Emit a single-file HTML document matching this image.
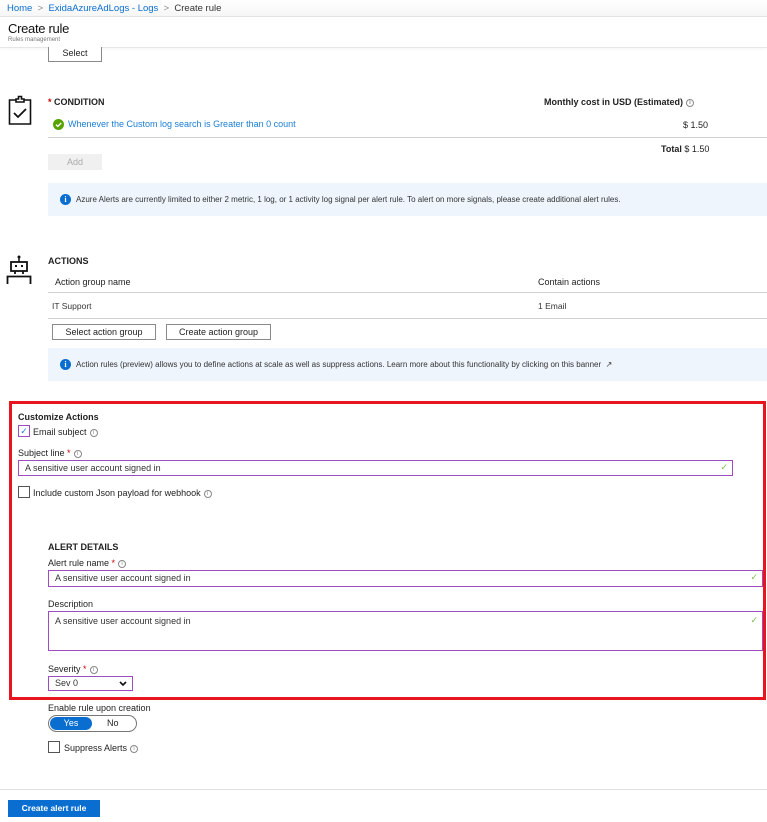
<!DOCTYPE html>
<html><head><meta charset="utf-8">
<style>
*{margin:0;padding:0;box-sizing:border-box}
body{width:767px;height:822px;background:#fff;font-family:"Liberation Sans",sans-serif;font-size:9px;color:#222;position:relative;overflow:hidden}
.a{position:absolute;white-space:nowrap}
.btn{position:absolute;border:1px solid #8a8a8a;background:#fff;text-align:center;font-size:9px;line-height:13px;color:#222}
.line{position:absolute;height:1px;background:#d0d0d0}
.b{font-weight:bold}
.req{color:#c00}
.inp{position:absolute;border:1px solid #a04cc0;background:#fff;font-size:9px;padding:2px 6px;color:#333}
.ck{position:absolute;right:4px;top:1px;color:#7cc04c;font-size:9px}
.i{display:inline-block;width:8px;height:8px;border:1px solid #888;border-radius:50%;font-size:6px;line-height:6px;text-align:center;color:#888;vertical-align:middle;margin-left:3px}
.cb{position:absolute;width:12px;height:12px;border:1px solid #555;background:#fff}
.banner{position:absolute;left:48px;right:0;background:#eef5fd}
.dot{position:absolute;width:11px;height:11px;border-radius:50%;background:#0a6ed1;color:#fff;font-size:8px;font-weight:bold;text-align:center;line-height:11px;font-family:"Liberation Serif",serif}
</style></head><body>
<div class="a" style="left:0;top:0;width:767px;height:17px;background:linear-gradient(#fff,#f6f6f6);border-bottom:1px solid #e2e2e2"></div>
<div class="a" style="left:7px;top:3px;font-size:9.5px;color:#0a6ed1">Home <span style="color:#888">&nbsp;&gt;&nbsp;</span> ExidaAzureAdLogs - Logs <span style="color:#888">&nbsp;&gt;&nbsp;</span> <span style="color:#333">Create rule</span></div>
<div class="a" style="left:8px;top:21px;font-size:13px;color:#111;letter-spacing:-0.3px">Create rule</div>
<div class="a" style="left:8px;top:37px;font-size:6px;color:#777">Rules management</div>
<div class="a" style="left:0;top:47px;width:767px;height:1px;background:#e6e6e6;box-shadow:0 1px 2px #eee"></div>
<div class="btn" style="left:48px;top:47px;width:54px;height:15px;border-top:none">Select</div>

<svg class="a" style="left:8px;top:95px" width="24" height="31" viewBox="0 0 24 31"><path d="M8 4h2.5V1.5h3V4H16v3H8z M8 5H1.5v24h21V5H16" fill="none" stroke="#111" stroke-width="1.6"/><path d="M6 18l4 4 8-8" fill="none" stroke="#111" stroke-width="1.8"/></svg>
<div class="a b" style="left:48px;top:97px;font-size:9px"><span class="req">*</span> CONDITION</div>
<div class="a b" style="left:544px;top:97px">Monthly cost in USD (Estimated)<span class="i">i</span></div>
<svg class="a" style="left:53px;top:119px" width="11" height="11"><circle cx="5.5" cy="5.5" r="5.5" fill="#57a300"/><path d="M3 5.6l1.8 1.8 3.4-3.4" stroke="#fff" stroke-width="1.4" fill="none"/></svg>
<div class="a" style="left:68px;top:119px;color:#1a7dd6;font-size:9px">Whenever the Custom log search is Greater than 0 count</div>
<div class="a" style="left:683px;top:120px">$ 1.50</div>
<div class="line" style="left:48px;top:137px;width:719px"></div>
<div class="a" style="left:661px;top:144px"><span class="b">Total</span> $ 1.50</div>
<div class="a" style="left:48px;top:154px;width:54px;height:16px;background:#f0f0f0;color:#aaa;text-align:center;line-height:16px">Add</div>
<div class="banner" style="top:183px;height:33px"></div>
<div class="dot" style="left:60px;top:194px">i</div>
<div class="a" style="left:76px;top:195px;font-size:8px;color:#333">Azure Alerts are currently limited to either 2 metric, 1 log, or 1 activity log signal per alert rule. To alert on more signals, please create additional alert rules.</div>

<svg class="a" style="left:6px;top:255px" width="26" height="30" viewBox="0 0 26 30"><circle cx="13" cy="2" r="1.5" fill="#111"/><path d="M13 3v4" stroke="#111" stroke-width="1.5"/><rect x="5" y="7" width="16" height="9" fill="none" stroke="#111" stroke-width="1.8"/><rect x="9" y="10" width="2" height="2" fill="#111"/><rect x="15" y="10" width="2" height="2" fill="#111"/><path d="M9 16v3M17 16v3M1.5 29v-7.5h23V29" fill="none" stroke="#111" stroke-width="1.8"/></svg>
<div class="a b" style="left:48px;top:256px">ACTIONS</div>
<div class="a" style="left:55px;top:277px">Action group name</div>
<div class="a" style="left:538px;top:277px">Contain actions</div>
<div class="line" style="left:48px;top:292px;width:719px"></div>
<div class="a" style="left:52px;top:301px;font-size:8.5px;color:#333">IT Support</div>
<div class="a" style="left:538px;top:301px;font-size:8.5px;color:#333">1 Email</div>
<div class="line" style="left:48px;top:318px;width:719px"></div>
<div class="btn" style="left:52px;top:324px;width:104px;height:16px;line-height:14px">Select action group</div>
<div class="btn" style="left:166px;top:324px;width:105px;height:16px;line-height:14px">Create action group</div>
<div class="banner" style="top:348px;height:33px"></div>
<div class="dot" style="left:60px;top:359px">i</div>
<div class="a" style="left:76px;top:360px;font-size:8px;color:#333">Action rules (preview) allows you to define actions at scale as well as suppress actions. Learn more about this functionality by clicking on this banner &nbsp;↗</div>

<div class="a" style="left:9px;top:401px;width:757px;height:299px;border:3px solid #e8141e"></div>
<div class="a b" style="left:18px;top:412px">Customize Actions</div>
<div class="cb" style="left:18px;top:425px;border-color:#a04cc0;color:#1a7dd6;font-size:9px;line-height:10px;text-align:center">✓</div>
<div class="a" style="left:33px;top:427px">Email subject<span class="i">i</span></div>
<div class="a" style="left:18px;top:448px">Subject line <span class="req">*</span><span class="i">i</span></div>
<div class="inp" style="left:18px;top:460px;width:715px;height:16px">A sensitive user account signed in<span class="ck">✓</span></div>
<div class="cb" style="left:18px;top:486px"></div>
<div class="a" style="left:33px;top:488px">Include custom Json payload for webhook<span class="i">i</span></div>

<div class="a b" style="left:48px;top:542px">ALERT DETAILS</div>
<div class="a" style="left:48px;top:558px">Alert rule name <span class="req">*</span><span class="i">i</span></div>
<div class="inp" style="left:48px;top:570px;width:715px;height:17px">A sensitive user account signed in<span class="ck">✓</span></div>
<div class="a" style="left:48px;top:599px">Description</div>
<div class="inp" style="left:48px;top:611px;width:715px;height:40px;padding-top:4px">A sensitive user account signed in<span class="ck" style="top:3px">✓</span></div>
<div class="a" style="left:48px;top:664px">Severity <span class="req">*</span><span class="i">i</span></div>
<div class="inp" style="left:48px;top:676px;width:85px;height:15px;padding:1px 6px">Sev 0<svg style="position:absolute;right:5px;top:4px" width="8" height="6"><path d="M1 1l3 3 3-3" stroke="#111" stroke-width="1.6" fill="none"/></svg></div>

<div class="a" style="left:48px;top:703px">Enable rule upon creation</div>
<div class="a" style="left:48px;top:715px;width:89px;height:17px;border:1px solid #777;border-radius:9px"></div>
<div class="a" style="left:50px;top:717px;width:42px;height:13px;background:#0a6ed1;border-radius:7px;color:#fff;text-align:center;line-height:13px">Yes</div>
<div class="a" style="left:107px;top:718px">No</div>
<div class="cb" style="left:48px;top:741px"></div>
<div class="a" style="left:64px;top:743px">Suppress Alerts<span class="i">i</span></div>
<div class="line" style="left:0;top:789px;width:767px;background:#e0e0e0"></div>
<div class="a b" style="left:8px;top:800px;width:92px;height:17px;background:#0a6ed1;color:#fff;text-align:center;line-height:17px;font-size:8.5px">Create alert rule</div>
</body></html>
